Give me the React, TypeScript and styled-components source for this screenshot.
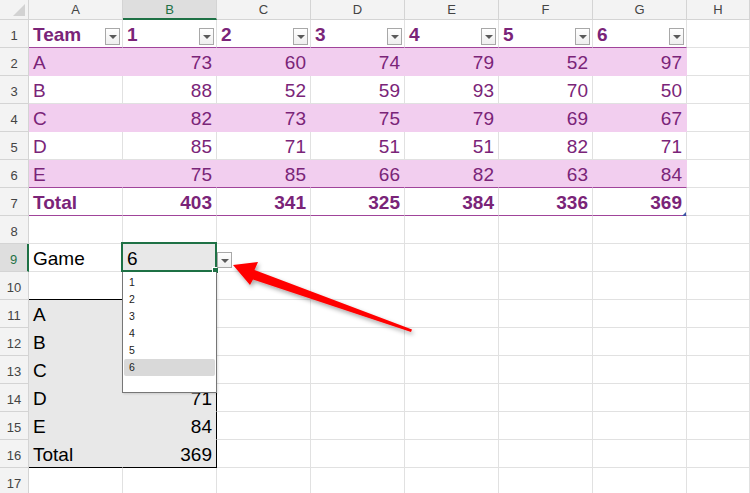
import React from "react";
import styled, { createGlobalStyle } from "styled-components";

const GlobalStyle = createGlobalStyle`
  html, body { margin: 0; padding: 0; background: #ffffff; overflow: hidden; }
  #root { width: 750px; height: 493px; overflow: hidden; }
`;

const GRID = "#E1E1E1";
const HEAD_BORDER = "#D4D4D4";
const PURPLE_TEXT = "#7A2478";
const PURPLE_LINE = "#A0449A";
const PINK = "#F2CEEF";
const GRAY_FILL = "#E8E8E8";
const GREEN = "#1E7145";
const FONT = `"Liberation Sans", Arial, sans-serif`;

const Sheet = styled.div`
  position: relative;
  width: 750px;
  height: 493px;
  overflow: hidden;
  display: grid;
  grid-template-columns: 29px repeat(7, 94px) 1fr;
  grid-template-rows: 20px repeat(17, 28px);
  font-family: ${FONT};
  background: #fff;
`;

const Corner = styled.div`
  position: relative;
  background: #F3F3F3;
  border-right: 1px solid ${HEAD_BORDER};
  border-bottom: 1px solid ${HEAD_BORDER};
  box-sizing: border-box;
  &::after {
    content: "";
    position: absolute;
    right: 3px;
    bottom: 3px;
    width: 0;
    height: 0;
    border-left: 12px solid transparent;
    border-bottom: 12px solid #D2D2D2;
  }
`;

const ColHeader = styled.div<{ $sel?: boolean }>`
  box-sizing: border-box;
  display: flex;
  align-items: center;
  justify-content: center;
  font-size: 13px;
  color: ${(p) => (p.$sel ? GREEN : "#444")};
  background: ${(p) => (p.$sel ? "#DEDEDE" : "#F3F3F3")};
  border-right: 1px solid ${HEAD_BORDER};
  border-bottom: ${(p) => (p.$sel ? `2px solid ${GREEN}` : `1px solid ${HEAD_BORDER}`)};
  padding-top: ${(p) => (p.$sel ? "1px" : "0")};
`;

const RowHeader = styled.div<{ $sel?: boolean }>`
  box-sizing: border-box;
  display: flex;
  align-items: center;
  justify-content: center;
  font-size: 13px;
  padding-top: 3px;
  color: ${(p) => (p.$sel ? GREEN : "#444")};
  background: ${(p) => (p.$sel ? "#DEDEDE" : "#F3F3F3")};
  border-right: ${(p) => (p.$sel ? `2px solid ${GREEN}` : `1px solid ${HEAD_BORDER}`)};
  border-bottom: 1px solid ${HEAD_BORDER};
`;

type CellProps = {
  $fill?: string;
  $right?: boolean;
  $bold?: boolean;
  $color?: string;
  $bb?: string;
  $br?: string;
  $size?: number;
};

const Cell = styled.div<CellProps>`
  position: relative;
  box-sizing: border-box;
  display: flex;
  align-items: flex-end;
  justify-content: ${(p) => (p.$right ? "flex-end" : "flex-start")};
  padding: 0 4px 1px 4px;
  font-size: ${(p) => p.$size ?? 19}px;
  line-height: 1.15;
  font-weight: ${(p) => (p.$bold ? 700 : 400)};
  color: ${(p) => p.$color ?? "#000"};
  background: ${(p) => p.$fill ?? "#fff"};
  border-right: 1px solid ${(p) => p.$br ?? p.$fill ?? GRID};
  border-bottom: 1px solid ${(p) => p.$bb ?? p.$fill ?? GRID};
  white-space: nowrap;
`;

const HeaderCellText = styled.span`
  flex: 1;
`;

const FilterButton = styled.div`
  position: absolute;
  right: 2px;
  bottom: 2px;
  width: 15px;
  height: 17px;
  box-sizing: border-box;
  border: 1px solid #A8A8A8;
  background: linear-gradient(#FFFFFF, #EFEFEF);
  display: flex;
  align-items: center;
  justify-content: center;
  &::after {
    content: "";
    width: 0;
    height: 0;
    border-left: 4px solid transparent;
    border-right: 4px solid transparent;
    border-top: 4px solid #5A5A5A;
    margin-top: 1px;
  }
`;

const Selection = styled.div`
  position: absolute;
  left: -2px;
  top: -2px;
  right: -1px;
  bottom: -1px;
  border: 2px solid ${GREEN};
  pointer-events: none;
  &::after {
    content: "";
    position: absolute;
    right: -4px;
    bottom: -4px;
    width: 5px;
    height: 5px;
    background: ${GREEN};
    border: 1px solid #fff;
  }
`;

const ListButton = styled.div`
  position: absolute;
  left: calc(100% + 1px);
  top: 8px;
  width: 15px;
  height: 16px;
  box-sizing: border-box;
  border: 1px solid #A8A8A8;
  background: linear-gradient(#FFFFFF, #EFEFEF);
  display: flex;
  align-items: center;
  justify-content: center;
  z-index: 3;
  &::after {
    content: "";
    width: 0;
    height: 0;
    border-left: 4px solid transparent;
    border-right: 4px solid transparent;
    border-top: 4px solid #5A5A5A;
    margin-top: 1px;
  }
`;

const DropList = styled.div`
  position: absolute;
  left: -1px;
  top: calc(100% + 1px);
  width: 95px;
  height: 121px;
  box-sizing: border-box;
  background: #fff;
  border: 1px solid #767676;
  border-top: none;
  padding: 2px 1px 0 1px;
  display: flex;
  flex-direction: column;
  z-index: 4;
  box-shadow: 1px 1px 2px rgba(0, 0, 0, 0.12);
`;

const ListItem = styled.div<{ $active?: boolean }>`
  height: 17px;
  display: flex;
  align-items: center;
  padding-left: 5px;
  font-size: 10.5px;
  color: #1a1a1a;
  border-radius: 2px;
  background: ${(p) => (p.$active ? "#D9D9D9" : "transparent")};
`;

const ResizeMark = styled.div`
  position: absolute;
  right: 0;
  bottom: -1px;
  width: 0;
  height: 0;
  border-left: 4px solid transparent;
  border-bottom: 4px solid #3B53A4;
`;

const ArrowLayer = styled.svg`
  position: absolute;
  left: 0;
  top: 0;
  width: 750px;
  height: 493px;
  pointer-events: none;
  z-index: 10;
`;

const cols = ["A", "B", "C", "D", "E", "F", "G", "H"];
const headers = ["Team", "1", "2", "3", "4", "5", "6"];
const data: [string, number[]][] = [
  ["A", [73, 60, 74, 79, 52, 97]],
  ["B", [88, 52, 59, 93, 70, 50]],
  ["C", [82, 73, 75, 79, 69, 67]],
  ["D", [85, 71, 51, 51, 82, 71]],
  ["E", [75, 85, 66, 82, 63, 84]],
];
const totals = [403, 341, 325, 384, 336, 369];
const lower: [string, string][] = [
  ["A", ""],
  ["B", ""],
  ["C", ""],
  ["D", "71"],
  ["E", "84"],
  ["Total", "369"],
];

export default function App() {
  const cells: React.ReactNode[] = [];
  let k = 0;
  const key = () => `c${k++}`;

  cells.push(<Corner key={key()} />);
  cols.forEach((c) => cells.push(<ColHeader key={key()} $sel={c === "B"}>{c}</ColHeader>));

  cells.push(<RowHeader key={key()}>1</RowHeader>);
  headers.forEach((h) =>
    cells.push(
      <Cell key={key()} $bold $color={PURPLE_TEXT} $bb={PURPLE_LINE}>
        <HeaderCellText>{h}</HeaderCellText>
        <FilterButton />
      </Cell>
    )
  );
  cells.push(<Cell key={key()} />);

  data.forEach(([team, vals], i) => {
    const fill = i % 2 === 0 ? PINK : undefined;
    const last = i === data.length - 1;
    cells.push(<RowHeader key={key()}>{i + 2}</RowHeader>);
    cells.push(
      <Cell key={key()} $fill={fill} $color={PURPLE_TEXT} $bb={last ? PURPLE_LINE : undefined}>
        {team}
      </Cell>
    );
    vals.forEach((v) =>
      cells.push(
        <Cell key={key()} $fill={fill} $right $color={PURPLE_TEXT} $bb={last ? PURPLE_LINE : undefined}>
          {v}
        </Cell>
      )
    );
    cells.push(<Cell key={key()} />);
  });

  cells.push(<RowHeader key={key()}>7</RowHeader>);
  cells.push(
    <Cell key={key()} $bold $color={PURPLE_TEXT} $bb={PURPLE_LINE}>
      Total
    </Cell>
  );
  totals.forEach((t, i) =>
    cells.push(
      <Cell key={key()} $bold $right $color={PURPLE_TEXT} $bb={PURPLE_LINE}>
        {t}
        {i === totals.length - 1 && <ResizeMark />}
      </Cell>
    )
  );
  cells.push(<Cell key={key()} />);

  cells.push(<RowHeader key={key()}>8</RowHeader>);
  for (let i = 0; i < 8; i++) cells.push(<Cell key={key()} />);

  cells.push(<RowHeader key={key()} $sel>9</RowHeader>);
  cells.push(<Cell key={key()}>Game</Cell>);
  cells.push(
    <Cell key={key()} $fill={GRAY_FILL} $br={GRID} $bb={GRID} style={{ zIndex: 5 }}>
      6
      <Selection />
      <ListButton />
      <DropList>
        {["1", "2", "3", "4", "5", "6"].map((n) => (
          <ListItem key={n} $active={n === "6"}>
            {n}
          </ListItem>
        ))}
      </DropList>
    </Cell>
  );
  for (let i = 0; i < 6; i++) cells.push(<Cell key={key()} />);

  cells.push(<RowHeader key={key()}>10</RowHeader>);
  cells.push(<Cell key={key()} $bb="#000" />);
  cells.push(<Cell key={key()} $bb="#000" />);
  for (let i = 0; i < 6; i++) cells.push(<Cell key={key()} />);

  lower.forEach(([label, val], i) => {
    const last = i === lower.length - 1;
    cells.push(<RowHeader key={key()}>{i + 11}</RowHeader>);
    cells.push(
      <Cell key={key()} $fill={GRAY_FILL} $bb={last ? "#000" : undefined}>
        {label}
      </Cell>
    );
    cells.push(
      <Cell key={key()} $fill={GRAY_FILL} $right $br="#000" $bb={last ? "#000" : undefined}>
        {val}
      </Cell>
    );
    for (let j = 0; j < 6; j++) cells.push(<Cell key={key()} />);
  });

  cells.push(<RowHeader key={key()}>17</RowHeader>);
  for (let i = 0; i < 8; i++) cells.push(<Cell key={key()} />);

  return (
    <>
      <GlobalStyle />
      <Sheet>
        {cells}
        <ArrowLayer viewBox="0 0 750 493">
          <defs>
            <filter id="arrowShadow" x="-10%" y="-30%" width="130%" height="180%">
              <feDropShadow dx="1.5" dy="2.5" stdDeviation="2" floodColor="#000" floodOpacity="0.35" />
            </filter>
          </defs>
          <polygon
            points="233,265 258,262 254.5,270 412,329.5 411,332 253,279.5 250,285"
            fill="#FF0000"
            filter="url(#arrowShadow)"
          />
        </ArrowLayer>
      </Sheet>
    </>
  );
}
